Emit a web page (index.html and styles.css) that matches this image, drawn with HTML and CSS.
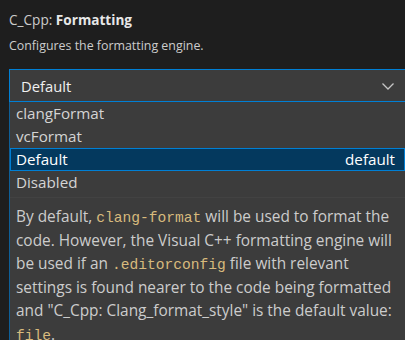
FILE: index.html
```html
<!DOCTYPE html>
<html lang="en">

<head>
    <meta charset="UTF-8">
    <title>C_Cpp: Formatting</title>
    <link rel="stylesheet" href="styles.css">
</head>

<body>
    <div class="setting">
        <div class="setting-title">C_Cpp: <b>Formatting</b></div>
        <div class="setting-desc">Configures the formatting engine.</div>

        <div class="select-box">
            <span>Default</span>
            <svg class="chevron" width="14" height="14" viewBox="0 0 14 14">
                <path d="M1.5 4.5 L7 10 L12.5 4.5" fill="none" stroke="#c5c5c5" stroke-width="1.3" />
            </svg>
        </div>

        <div class="dropdown">
            <ul class="options">
                <li>clangFormat</li>
                <li>vcFormat</li>
                <li class="selected"><span>Default</span><span class="tag">default</span></li>
                <li>Disabled</li>
            </ul>
            <div class="details">
                By default, <code>clang-format</code> will be used to format the code. However, the Visual C++
                formatting engine will be used if an <code>.editorconfig</code> file with relevant settings is found
                nearer to the code being formatted and "C_Cpp: Clang_format_style" is the default value:
                <code>file</code>.
            </div>
        </div>
    </div>
</body>

</html>
```

FILE: styles.css
```css
* {
    margin: 0;
    padding: 0;
    box-sizing: border-box;
}

body {
    background: #1e1e1e;
    font-family: "Open Sans", "Noto Sans", sans-serif;
    font-size: 13px;
    color: #cccccc;
    width: 405px;
    height: 340px;
    overflow: hidden;
}

.setting {
    padding: 10px 0 0 9px;
}

.setting-title {
    line-height: 20px;
    font-size: 13.6px;
    color: #cccccc;
}

.setting-title b {
    color: #e7e7e7;
    font-weight: 700;
}

.setting-desc {
    line-height: 20px;
    margin-top: 6px;
    font-size: 12.4px;
}

.select-box {
    margin-top: 13px;
    height: 33px;
    background: #3c3c3c;
    border: 1px solid #007fd4;
    border-right: none;
    padding: 0 10px 0 11px;
    display: flex;
    align-items: center;
    justify-content: space-between;
    font-size: 14.8px;
    color: #f0f0f0;
}

.chevron {
    display: block;
}

.dropdown {
    background: #3c3c3c;
    border-left: 1px solid #0e5f98;
}

.options {
    list-style: none;
}

.options li {
    height: 23px;
    line-height: 21px;
    padding: 0 9px 0 5px;
    border: 1px solid transparent;
    font-size: 15.2px;
    color: #d4d4d4;
    display: flex;
    justify-content: space-between;
}

.options li.selected {
    background: #04395e;
    border-color: #007fd4;
    color: #ffffff;
}

.details {
    margin-top: 3px;
    border-top: 1px solid #424242;
    padding: 7px 6px 0 6px;
    font-size: 15.4px;
    line-height: 23.6px;
    color: #cccccc;
}

.details code {
    font-family: "Liberation Mono", "DejaVu Sans Mono", monospace;
    font-size: 14.6px;
    line-height: 1;
    color: #d7ba7d;
}
```
